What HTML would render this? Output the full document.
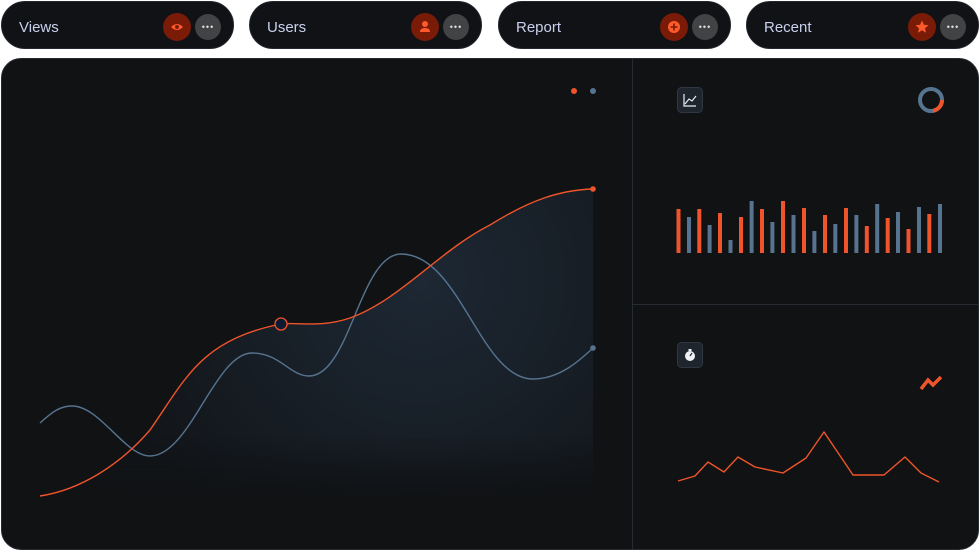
<!DOCTYPE html>
<html><head><meta charset="utf-8"><style>
*{margin:0;padding:0;box-sizing:border-box}
body{width:980px;height:551px;background:#fff;position:relative;overflow:hidden;font-family:"Liberation Sans",sans-serif}
.card{position:absolute;top:1px;height:48px;width:233px;background:#101215;border:1px solid #22262e;border-radius:24px}
.card span{position:absolute;left:17px;top:17px;font-size:15px;color:#c9d1ee}
.ic{position:absolute;top:11px;left:161px;width:28px;height:28px;border-radius:50%;background:#7a1b08}
.dots{position:absolute;top:12px;left:193px;width:26px;height:26px;border-radius:50%;background:#414345;color:#ddd;font-size:9px;text-align:center;line-height:26px;letter-spacing:1px}
.main{position:absolute;left:1px;top:58px;width:978px;height:492px;background:#101214;border:1px solid #252a33;border-radius:20px;overflow:hidden}
</style></head><body>
<div class="card" style="left:1px"><span>Views</span><div class="ic"><svg width="28" height="28"><path d="M8 14 Q14 8 20 14 Q14 20 8 14Z" fill="#ff5a2a"/><circle cx="14" cy="14" r="2" fill="#7a1b08"/></svg></div><div class="dots">•••</div></div>
<div class="card" style="left:249px"><span>Users</span><div class="ic"><svg width="28" height="28"><circle cx="14" cy="11" r="3" fill="#ff5a2a"/><path d="M9 19 Q9 15 14 15 Q19 15 19 19Z" fill="#ff5a2a"/></svg></div><div class="dots">•••</div></div>
<div class="card" style="left:498px"><span>Report</span><div class="ic"><svg width="28" height="28"><circle cx="14" cy="14" r="6" fill="#ff5a2a"/><path d="M14 10.5V17.5M10.5 14H17.5" stroke="#7a1b08" stroke-width="1.6"/></svg></div><div class="dots">•••</div></div>
<div class="card" style="left:746px"><span>Recent</span><div class="ic"><svg width="28" height="28"><path d="M14 7.5L15.9 11.8 20.5 12.2 17 15.2 18 19.7 14 17.3 10 19.7 11 15.2 7.5 12.2 12.1 11.8Z" fill="#ff5a2a"/></svg></div><div class="dots">•••</div></div>
<div class="main"></div>
<svg style="position:absolute;left:0;top:0" width="980" height="551">
<defs>
<radialGradient id="g" cx="420" cy="280" r="320" gradientUnits="userSpaceOnUse"><stop offset="0" stop-color="#1d2834"/><stop offset="1" stop-color="#121519"/></radialGradient>
<linearGradient id="f" x1="0" y1="0" x2="0" y2="1"><stop offset="0.8" stop-color="#fff"/><stop offset="1" stop-color="#000"/></linearGradient>
<mask id="m"><rect x="0" y="180" width="600" height="320" fill="url(#f)"/></mask>
</defs>
<line x1="632.5" y1="59" x2="632.5" y2="550" stroke="#252a33"/>
<line x1="633" y1="304.5" x2="979" y2="304.5" stroke="#252a33"/>
<path d="M40,496 C80,490 120,465 150,430 C185,380 200,340 281,324 C300,322 320,328 350,318 C400,300 440,250 490,225 C530,200 560,190 593,189 L593,495 L40,495Z" fill="url(#g)" mask="url(#m)"/>
<path d="M40,423 C52,412 60,406 72,406 C100,406 125,456 150,456 C190,456 215,353 252,353 C280,353 290,376 309,376 C350,376 360,254 401,254 C460,254 480,379 533,379 C560,379 580,360 593,348" fill="none" stroke="#56748f" stroke-width="1.4"/>
<path d="M40,496 C80,490 120,465 150,430 C185,380 200,340 281,324 C300,322 320,328 350,318 C400,300 440,250 490,225 C530,200 560,190 593,189" fill="none" stroke="#f0542a" stroke-width="1.4"/>
<circle cx="281" cy="324" r="6" fill="#0e1a33" stroke="#f0542a" stroke-width="1.3"/>
<circle cx="593" cy="189" r="2.8" fill="#f0542a"/>
<circle cx="593" cy="348" r="2.8" fill="#56748f"/>
<circle cx="574" cy="91" r="3" fill="#f0542a"/>
<circle cx="593" cy="91" r="3" fill="#56748f"/>
<rect x="677.5" y="87.5" width="25" height="25" rx="4" fill="#1e252d" stroke="#2f3742"/>
<path d="M684 94V106H696M685 104L689 99 692 101 696 96" fill="none" stroke="#e8eef4" stroke-width="1.2"/>
<circle cx="931" cy="100" r="11" fill="none" stroke="#56748f" stroke-width="4"/>
<path d="M942 100 A11 11 0 0 1 933 110.8" fill="none" stroke="#f0542a" stroke-width="4"/>
<rect x="677.5" y="342.5" width="25" height="25" rx="4" fill="#1e252d" stroke="#2f3742"/>
<circle cx="690" cy="356" r="5" fill="#eef2f6"/><rect x="688.5" y="349" width="3" height="2" fill="#eef2f6"/><path d="M690 356L692 353" stroke="#1e252d" stroke-width="1.2"/>
<path d="M921,389 L928,380 L933,385 L941,377" fill="none" stroke="#f0542a" stroke-width="3.5"/>
<path d="M678,481 L695,476 L708,462 L724,472 L738,457 L755,467 L783,473 L806,458 L824,432 L853,475 L884,475 L905,457 L921,473 L939,482" fill="none" stroke="#f0542a" stroke-width="1.4" stroke-linejoin="round"/>
<g>
<rect x="676.5" y="209" width="4" height="44" fill="#f0542a"/>
<rect x="687" y="217" width="4" height="36" fill="#56748f"/>
<rect x="697.3" y="209" width="4" height="44" fill="#f0542a"/>
<rect x="707.6" y="225" width="4" height="28" fill="#56748f"/>
<rect x="718" y="213" width="4" height="40" fill="#f0542a"/>
<rect x="728.5" y="240" width="4" height="13" fill="#56748f"/>
<rect x="739" y="217" width="4" height="36" fill="#f0542a"/>
<rect x="749.6" y="201" width="4" height="52" fill="#56748f"/>
<rect x="760" y="209" width="4" height="44" fill="#f0542a"/>
<rect x="770.4" y="222" width="4" height="31" fill="#56748f"/>
<rect x="781" y="201" width="4" height="52" fill="#f0542a"/>
<rect x="791.5" y="215" width="4" height="38" fill="#56748f"/>
<rect x="802" y="208" width="4" height="45" fill="#f0542a"/>
<rect x="812.4" y="231" width="4" height="22" fill="#56748f"/>
<rect x="823" y="215" width="4" height="38" fill="#f0542a"/>
<rect x="833.3" y="224" width="4" height="29" fill="#56748f"/>
<rect x="844" y="208" width="4" height="45" fill="#f0542a"/>
<rect x="854.4" y="215" width="4" height="38" fill="#56748f"/>
<rect x="864.8" y="226" width="4" height="27" fill="#f0542a"/>
<rect x="875.2" y="204" width="4" height="49" fill="#56748f"/>
<rect x="885.7" y="218" width="4" height="35" fill="#f0542a"/>
<rect x="896" y="212" width="4" height="41" fill="#56748f"/>
<rect x="906.5" y="229" width="4" height="24" fill="#f0542a"/>
<rect x="917" y="207" width="4" height="46" fill="#56748f"/>
<rect x="927.3" y="214" width="4" height="39" fill="#f0542a"/>
<rect x="938" y="204" width="4" height="49" fill="#56748f"/>
</g>
</svg>
</body></html>
